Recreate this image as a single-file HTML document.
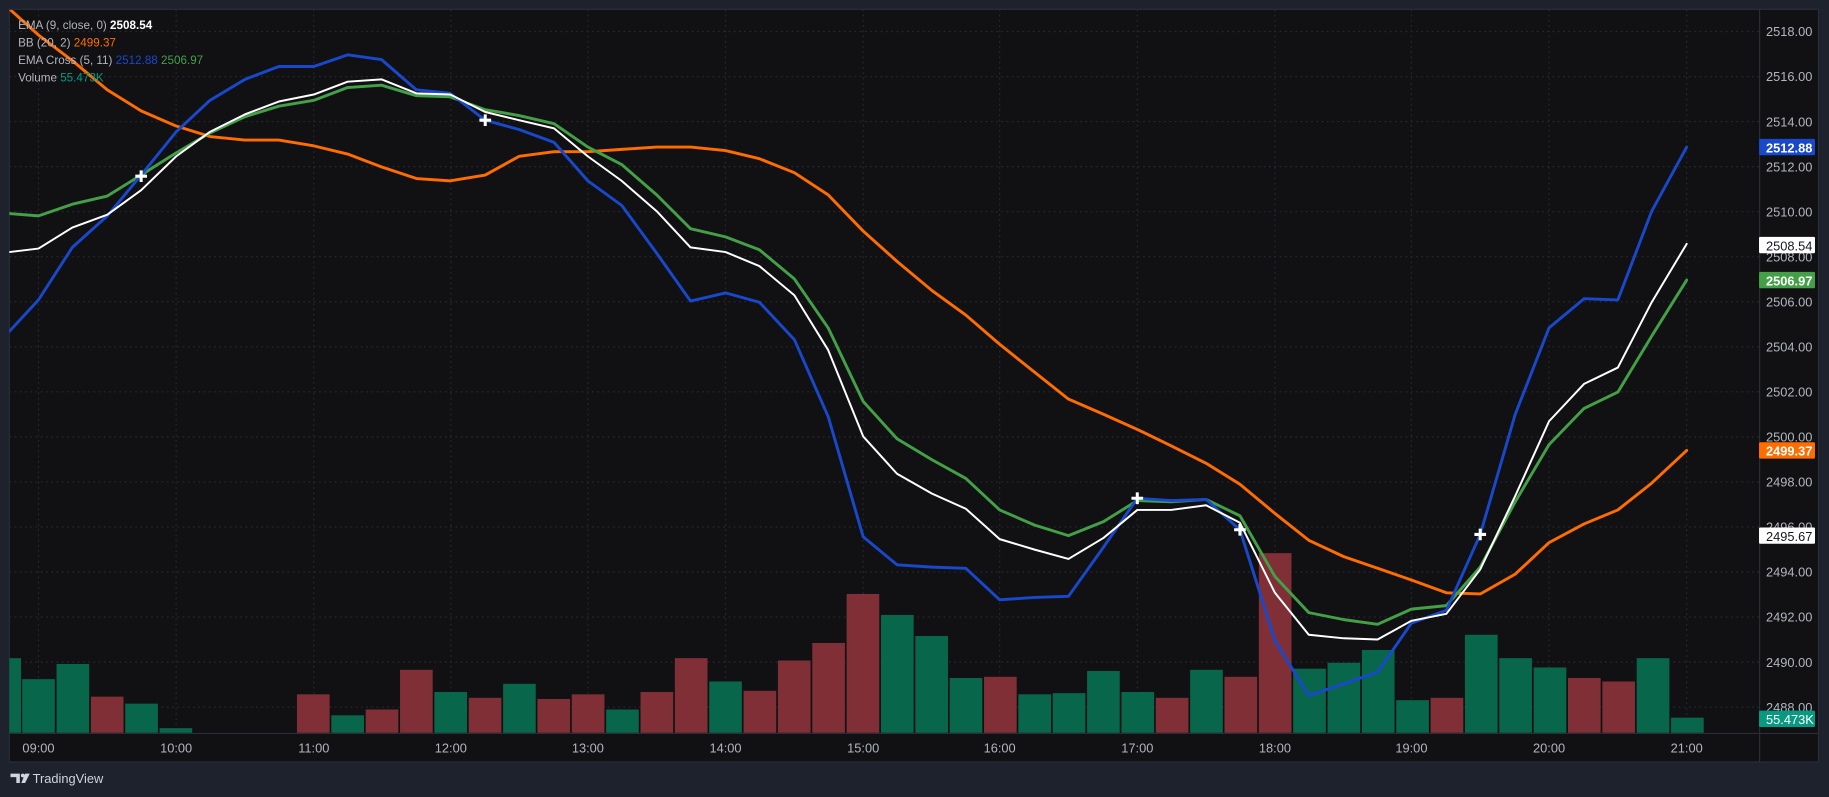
<!DOCTYPE html>
<html><head><meta charset="utf-8">
<style>
html,body{margin:0;padding:0;background:#1e222d;width:1829px;height:797px;overflow:hidden}
svg{display:block}
text{font-family:"Liberation Sans",sans-serif}
</style></head>
<body>
<svg width="1829" height="797" viewBox="0 0 1568 683" preserveAspectRatio="none" xmlns="http://www.w3.org/2000/svg">
<rect x="0" y="0" width="1568" height="683" fill="#1e222d"/>
<rect x="8" y="8" width="1551" height="645" fill="#111114" stroke="#2a2e39" stroke-width="1"/>
<clipPath id="plot"><rect x="8" y="8.5" width="1500.5" height="620"/></clipPath>
<g stroke="#26292f" stroke-width="1" stroke-dasharray="1.5,3">
<line x1="8" x2="1508" y1="27" y2="27"/><line x1="8" x2="1508" y1="65.6" y2="65.6"/><line x1="8" x2="1508" y1="104.2" y2="104.2"/><line x1="8" x2="1508" y1="142.8" y2="142.8"/><line x1="8" x2="1508" y1="181.4" y2="181.4"/><line x1="8" x2="1508" y1="220" y2="220"/><line x1="8" x2="1508" y1="258.6" y2="258.6"/><line x1="8" x2="1508" y1="297.2" y2="297.2"/><line x1="8" x2="1508" y1="335.8" y2="335.8"/><line x1="8" x2="1508" y1="374.4" y2="374.4"/><line x1="8" x2="1508" y1="413" y2="413"/><line x1="8" x2="1508" y1="451.6" y2="451.6"/><line x1="8" x2="1508" y1="490.2" y2="490.2"/><line x1="8" x2="1508" y1="528.8" y2="528.8"/><line x1="8" x2="1508" y1="567.4" y2="567.4"/><line x1="8" x2="1508" y1="606" y2="606"/>
<line y1="8" y2="628" x1="33" x2="33"/><line y1="8" y2="628" x1="151" x2="151"/><line y1="8" y2="628" x1="269" x2="269"/><line y1="8" y2="628" x1="386.5" x2="386.5"/><line y1="8" y2="628" x1="504" x2="504"/><line y1="8" y2="628" x1="622" x2="622"/><line y1="8" y2="628" x1="740" x2="740"/><line y1="8" y2="628" x1="857" x2="857"/><line y1="8" y2="628" x1="975" x2="975"/><line y1="8" y2="628" x1="1093" x2="1093"/><line y1="8" y2="628" x1="1210" x2="1210"/><line y1="8" y2="628" x1="1328" x2="1328"/><line y1="8" y2="628" x1="1446" x2="1446"/>
</g>
<g>
<rect x="8" y="564" width="10" height="64" fill="#08664a"/>
<rect x="19" y="582" width="28" height="46" fill="#08664a"/>
<rect x="48.45" y="569" width="28" height="59" fill="#08664a"/>
<rect x="77.9" y="597" width="28" height="31" fill="#7f2f35"/>
<rect x="107.35" y="603" width="28" height="25" fill="#08664a"/>
<rect x="136.8" y="624" width="28" height="4" fill="#08664a"/>
<rect x="254.6" y="595" width="28" height="33" fill="#7f2f35"/>
<rect x="284.05" y="613" width="28" height="15" fill="#08664a"/>
<rect x="313.5" y="608" width="28" height="20" fill="#7f2f35"/>
<rect x="342.95" y="574" width="28" height="54" fill="#7f2f35"/>
<rect x="372.4" y="593" width="28" height="35" fill="#08664a"/>
<rect x="401.85" y="598" width="28" height="30" fill="#7f2f35"/>
<rect x="431.3" y="586" width="28" height="42" fill="#08664a"/>
<rect x="460.75" y="599" width="28" height="29" fill="#7f2f35"/>
<rect x="490.2" y="595" width="28" height="33" fill="#7f2f35"/>
<rect x="519.65" y="608" width="28" height="20" fill="#08664a"/>
<rect x="549.1" y="593" width="28" height="35" fill="#7f2f35"/>
<rect x="578.55" y="564" width="28" height="64" fill="#7f2f35"/>
<rect x="608" y="584" width="28" height="44" fill="#08664a"/>
<rect x="637.45" y="592" width="28" height="36" fill="#7f2f35"/>
<rect x="666.9" y="566" width="28" height="62" fill="#7f2f35"/>
<rect x="696.35" y="551" width="28" height="77" fill="#7f2f35"/>
<rect x="725.8" y="509" width="28" height="119" fill="#7f2f35"/>
<rect x="755.25" y="527" width="28" height="101" fill="#08664a"/>
<rect x="784.7" y="545" width="28" height="83" fill="#08664a"/>
<rect x="814.15" y="581" width="28" height="47" fill="#08664a"/>
<rect x="843.6" y="580" width="28" height="48" fill="#7f2f35"/>
<rect x="873.05" y="595" width="28" height="33" fill="#08664a"/>
<rect x="902.5" y="594" width="28" height="34" fill="#08664a"/>
<rect x="931.95" y="575" width="28" height="53" fill="#08664a"/>
<rect x="961.4" y="593" width="28" height="35" fill="#08664a"/>
<rect x="990.85" y="598" width="28" height="30" fill="#7f2f35"/>
<rect x="1020.3" y="574" width="28" height="54" fill="#08664a"/>
<rect x="1049.75" y="580" width="28" height="48" fill="#7f2f35"/>
<rect x="1079.2" y="474" width="28" height="154" fill="#7f2f35"/>
<rect x="1108.65" y="573" width="28" height="55" fill="#08664a"/>
<rect x="1138.1" y="568" width="28" height="60" fill="#08664a"/>
<rect x="1167.55" y="557" width="28" height="71" fill="#08664a"/>
<rect x="1197" y="600" width="28" height="28" fill="#08664a"/>
<rect x="1226.45" y="598" width="28" height="30" fill="#7f2f35"/>
<rect x="1255.9" y="544" width="28" height="84" fill="#08664a"/>
<rect x="1285.35" y="564" width="28" height="64" fill="#08664a"/>
<rect x="1314.8" y="572" width="28" height="56" fill="#08664a"/>
<rect x="1344.25" y="581" width="28" height="47" fill="#7f2f35"/>
<rect x="1373.7" y="584" width="28" height="44" fill="#7f2f35"/>
<rect x="1403.15" y="564" width="28" height="64" fill="#08664a"/>
<rect x="1432.6" y="615" width="28" height="13" fill="#08664a"/>
</g>
<g clip-path="url(#plot)" fill="none" stroke-linejoin="round" stroke-linecap="round">
<polyline stroke="#ff6d00" stroke-width="2.5" points="4,4 33,30 62,52 92,77 121,95 151,108 180,117 210,120 239,120 269,125 298,132 327,143 357,153 386,155 416,150 445,134 475,130 504,130 533,128 563,126 592,126 622,129 651,136 681,148 710,167 740,198 769,224 799,249 828,270 857,295 887,319 916,342 946,355 975,368 1004,382 1034,397 1063,415 1093,440 1122,463 1152,477 1181,487 1210,497 1240,508 1269,509 1299,492 1328,465 1358,449 1387,437 1416,414 1446,386"/>
<polyline stroke="#43a047" stroke-width="2.5" points="8,183 33,185 62,175 92,168 121,150 151,131 180,114 210,100 239,91 269,86 298,75 327,73 357,82 386,83 416,94 445,99 475,106 504,126 533,141 563,167 592,196 622,203 651,214 681,239 710,281 740,344 769,376 799,394 828,410 857,437 887,450 916,459 946,447 975,429 1004,430 1034,428 1063,442 1093,494 1122,525 1152,531 1181,535 1210,522 1240,519 1269,486 1299,430 1328,381 1358,350 1387,336 1416,288 1446,240"/>
<polyline stroke="#1848cc" stroke-width="2.5" points="8,284 33,257 62,212 92,185 121,150 151,113 180,86 210,68 239,57 269,57 298,47 327,51 357,77 386,80 416,103 445,111 475,122 504,155 533,176 563,217 592,258 622,251 651,259 681,291 710,357 740,460 769,484 799,486 828,487 857,514 887,512 916,511 946,469 975,427 1004,429 1034,428 1063,454 1093,549 1122,596 1152,586 1181,576 1210,534 1240,523 1269,458 1299,355 1328,281 1358,256 1387,257 1416,181 1446,126"/>
<polyline stroke="#ffffff" stroke-width="1.7" points="8,216 33,213 62,195 92,184 121,163 151,134 180,113 210,98 239,87 269,81 298,70 327,68 357,80 386,81 416,96 445,103 475,110 504,134 533,155 563,181 592,212 622,216 651,228 681,253 710,300 740,374 769,406 799,423 828,436 857,462 887,471 916,479 946,461 975,437 1004,437 1034,433 1063,448 1093,508 1122,544 1152,547 1181,548 1210,532 1240,526 1269,488 1299,425 1328,361 1358,329 1387,315 1416,259 1446,209"/>
</g>
<g stroke="#fff" stroke-width="2.6">
<path d="M116,151h10M121,146v10"/>
<path d="M411,103h10M416,98v10"/>
<path d="M970,427h10M975,422v10"/>
<path d="M1058,454h10M1063,449v10"/>
<path d="M1264,458h10M1269,453v10"/>
</g>
<line x1="1508.5" y1="8" x2="1508.5" y2="653" stroke="#2a2e39"/>
<line x1="8" y1="628.5" x2="1559" y2="628.5" stroke="#2a2e39"/>
<g font-size="11" fill="#b2b5be">
<text x="1514" y="31">2518.00</text><text x="1514" y="69.6">2516.00</text><text x="1514" y="108.2">2514.00</text><text x="1514" y="146.8">2512.00</text><text x="1514" y="185.4">2510.00</text><text x="1514" y="224">2508.00</text><text x="1514" y="262.6">2506.00</text><text x="1514" y="301.2">2504.00</text><text x="1514" y="339.8">2502.00</text><text x="1514" y="378.4">2500.00</text><text x="1514" y="417">2498.00</text><text x="1514" y="455.6">2496.00</text><text x="1514" y="494.2">2494.00</text><text x="1514" y="532.8">2492.00</text><text x="1514" y="571.4">2490.00</text><text x="1514" y="610">2488.00</text>
</g>
<g font-size="11" font-weight="bold">
<rect x="1508" y="119" width="48" height="14" rx="1" fill="#1848cc"/><text x="1514" y="130.5" fill="#fff">2512.88</text>
<rect x="1508" y="203" width="48" height="14" rx="1" fill="#ffffff"/><text x="1514" y="214.5" fill="#131722" font-weight="normal">2508.54</text>
<rect x="1508" y="233" width="48" height="14" rx="1" fill="#43a047"/><text x="1514" y="244.5" fill="#fff">2506.97</text>
<rect x="1508" y="379" width="48" height="14" rx="1" fill="#ff6d00"/><text x="1514" y="390.5" fill="#fff">2499.37</text>
<rect x="1508" y="452" width="48" height="14" rx="1" fill="#ffffff"/><text x="1514" y="463.5" fill="#131722" font-weight="normal">2495.67</text>
<rect x="1508" y="609" width="48" height="14" rx="1" fill="#089981"/><text x="1514" y="620.5" fill="#fff" font-weight="normal">55.473K</text>
</g>
<g font-size="11" fill="#b2b5be" text-anchor="middle">
<text x="33" y="645">09:00</text><text x="151" y="645">10:00</text><text x="269" y="645">11:00</text><text x="386.5" y="645">12:00</text><text x="504" y="645">13:00</text><text x="622" y="645">14:00</text><text x="740" y="645">15:00</text><text x="857" y="645">16:00</text><text x="975" y="645">17:00</text><text x="1093" y="645">18:00</text><text x="1210" y="645">19:00</text><text x="1328" y="645">20:00</text><text x="1446" y="645">21:00</text>
</g>
<g font-size="10">
<text x="15.5" y="25" fill="#b2b5be">EMA (9, close, 0) <tspan fill="#ffffff" font-weight="bold">2508.54</tspan></text>
<text x="15.5" y="40" fill="#b2b5be">BB (20, 2) <tspan fill="#ff6d00">2499.37</tspan></text>
<text x="15.5" y="55" fill="#b2b5be">EMA Cross (5, 11) <tspan fill="#1848cc">2512.88</tspan> <tspan fill="#43a047">2506.97</tspan></text>
<text x="15.5" y="70" fill="#b2b5be">Volume <tspan fill="#089981">55.473K</tspan></text>
</g>
<g fill="#d1d4dc">
<path d="M9,663h8v8h-3v-5h-5z"/>
<circle cx="19.5" cy="664.6" r="1.6"/>
<path d="M21.5,663h4l-4,8h-3.2z"/>
<text x="28" y="671" font-size="11" fill="#d1d4dc">TradingView</text>
</g>
</svg>
</body></html>
